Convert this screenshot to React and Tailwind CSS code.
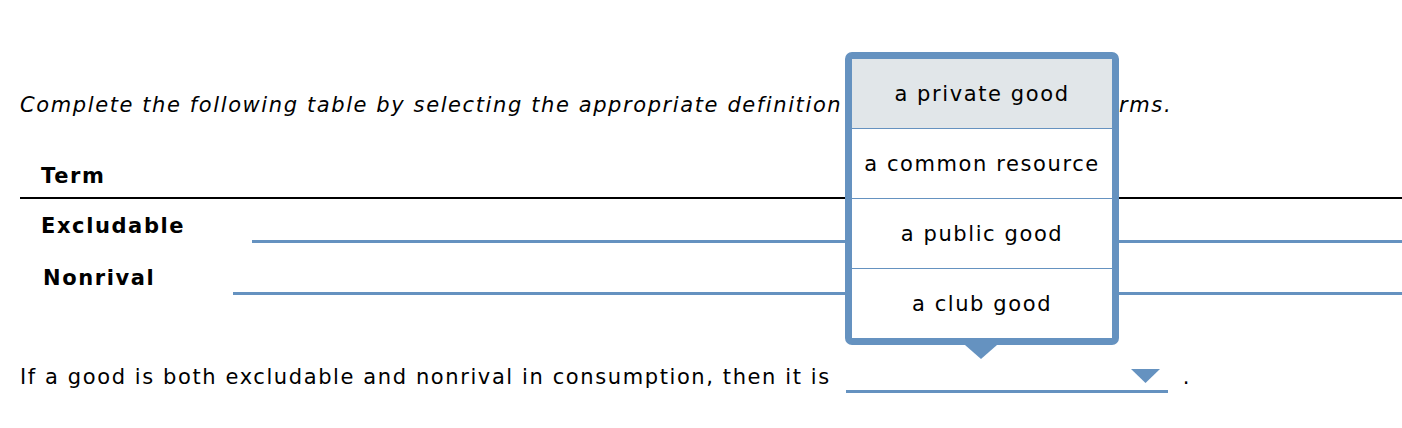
const BLUE = '#6592c0'

function Caret({ className }) {
  return (
    <svg className={className} width="29" height="14" viewBox="0 0 29 14">
      <path d="M0 0 H29 L14.5 14 Z" fill={BLUE} />
    </svg>
  )
}

export default function App() {
  const options = ['a private good', 'a common resource', 'a public good', 'a club good']

  return (
    <div className="relative w-[1402px] h-[428px] bg-white text-black text-[21px] leading-[24px] tracking-[1.6px] overflow-hidden" style={{ fontFamily: '"DejaVu Sans", Verdana, sans-serif' }}>
      <div className="pl-[20px] pt-[93px]">
        <p className="italic whitespace-nowrap">
          Complete the following table by selecting the appropriate definition for all the following terms.
        </p>

        {/* Table */}
        <div className="mt-[47px]">
          <div className="border-b-2 border-black pb-[9px]">
            <div className="pl-[21px] font-bold">Term</div>
          </div>
          <div className="flex pt-[15px]">
            <div className="w-[232px] pl-[21px] font-bold">Excludable</div>
            <div className="flex-1 h-[29px] border-b-[3px]" style={{ borderColor: BLUE }} />
          </div>
          <div className="flex pt-[23px]">
            <div className="w-[213px] pl-[23px] font-bold">Nonrival</div>
            <div className="flex-1 h-[29px] border-b-[3px]" style={{ borderColor: BLUE }} />
          </div>
        </div>

        {/* Sentence */}
        <div className="flex items-start mt-[70px] whitespace-nowrap">
          <span>If a good is both excludable and nonrival in consumption, then it is</span>
          <div className="ml-[15px] w-[322px] h-[28px] border-b-[3px] flex justify-end items-start pt-[4px] pr-[8px]" style={{ borderColor: BLUE }}>
            <Caret />
          </div>
          <span className="ml-[15px]">.</span>
        </div>
      </div>

      {/* Open dropdown menu */}
      <div className="absolute left-[845px] top-[52px] w-[274px]">
        <div className="border-[7px] rounded-[7px] bg-white overflow-hidden" style={{ borderColor: BLUE }}>
          {options.map((o, i) => (
            <div
              key={o}
              className={`flex items-center justify-center whitespace-nowrap ${i === 0 ? 'h-[69px] bg-[#e1e6e9]' : 'h-[70px] bg-white border-t'}`}
              style={i === 0 ? undefined : { borderColor: BLUE }}
            >
              {o}
            </div>
          ))}
        </div>
        <svg className="absolute left-[120px] top-[293px]" width="32" height="14" viewBox="0 0 32 14">
          <path d="M0 0 H32 L16 14 Z" fill={BLUE} />
        </svg>
      </div>
    </div>
  )
}
